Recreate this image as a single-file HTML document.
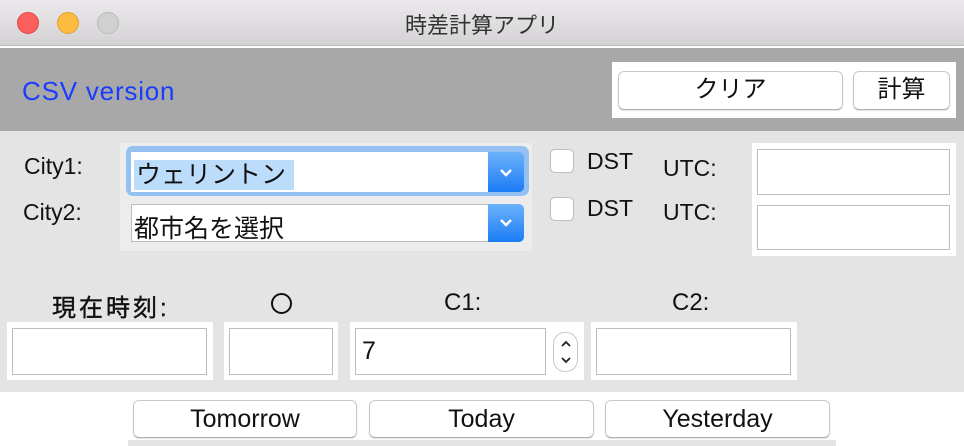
<!DOCTYPE html>
<html><head><meta charset="utf-8"><style>
*{margin:0;padding:0;box-sizing:border-box}
body{width:964px;height:446px;overflow:hidden;background:#e4e4e4;font-family:"Liberation Sans","Noto Sans CJK JP",sans-serif;position:relative;color:#111}
.a{position:absolute}
.title{left:0;top:0;width:964px;height:46px;background:linear-gradient(#ebe9eb,#d4d2d4);border-bottom:1px solid #bbb}
.dot{width:22px;height:22px;border-radius:50%;top:12px}
.band{left:0;top:48px;width:964px;height:83px;background:#a8a8a8}
.btn{background:#fff;border:1px solid #c8c8c8;border-bottom-color:#b0b0b0;border-radius:6px;text-align:center;font-size:24px;box-shadow:0 1px 1px rgba(0,0,0,.12)}
.fld{background:#fff;border:1px solid #bdbdbd}
.wp{background:#fff}
.lbl{font-size:23px}
.arr{background:linear-gradient(#6cb2fb,#1b7cf5);border-radius:0 5px 5px 0}
.cb{width:24px;height:24px;background:#fff;border:1px solid #bdbdbd;border-radius:5px}
</style></head><body>
<div class="a title"></div>
<div class="a dot" style="left:17px;background:#fc605c;border:1px solid #de4a45"></div>
<div class="a dot" style="left:57px;background:#fdbc40;border:1px solid #dea034"></div>
<div class="a dot" style="left:97px;background:#d0d0d0;border:1px solid #b8b8b8"></div>
<div class="a" style="left:0;width:964px;top:8px;text-align:center;font-size:22px;color:#333">時差計算アプリ</div>
<div class="a band"></div>
<div class="a" style="left:0;top:46px;width:964px;height:2px;background:#fff"></div>
<div class="a" style="left:22px;top:76px;font-size:26px;letter-spacing:0.8px;color:#1a3cff">CSV version</div>
<div class="a wp" style="left:612px;top:62px;width:344px;height:56px"></div>
<div class="a btn" style="left:618px;top:71px;width:225px;height:39px;line-height:36px">クリア</div>
<div class="a btn" style="left:853px;top:71px;width:97px;height:39px;line-height:36px">計算</div>

<div class="a lbl" style="left:24px;top:153px">City1:</div>
<div class="a lbl" style="left:23px;top:199px">City2:</div>
<div class="a" style="left:120px;top:143px;width:412px;height:108px;background:#ececec"></div>
<div class="a" style="left:126px;top:146px;width:403px;height:50px;border-radius:7px;background:#94c0f2"></div>
<div class="a fld" style="left:131px;top:152px;width:360px;height:40px;border:none"></div>
<div class="a" style="left:134px;top:160px;width:160px;height:30px;background:#bcdcfb"></div>
<div class="a" style="left:136px;top:155px;font-size:25px">ウェリントン</div>
<div class="a arr" style="left:488px;top:152px;width:36px;height:40px"></div>
<div class="a fld" style="left:131px;top:204px;width:360px;height:38px"></div>
<div class="a" style="left:134px;top:209px;font-size:25px">都市名を選択</div>
<div class="a arr" style="left:488px;top:204px;width:36px;height:38px"></div>
<svg class="a" style="left:496px;top:162px" width="20" height="20"><path d="M5 8l5 5 5-5" stroke="#fff" stroke-width="2.4" fill="none"/></svg>
<svg class="a" style="left:496px;top:212px" width="20" height="20"><path d="M5 8l5 5 5-5" stroke="#fff" stroke-width="2.4" fill="none"/></svg>

<div class="a cb" style="left:550px;top:149px"></div>
<div class="a cb" style="left:550px;top:197px"></div>
<div class="a lbl" style="left:587px;top:148px">DST</div>
<div class="a lbl" style="left:587px;top:195px">DST</div>
<div class="a lbl" style="left:663px;top:155px">UTC:</div>
<div class="a lbl" style="left:663px;top:199px">UTC:</div>
<div class="a wp" style="left:752px;top:143px;width:204px;height:113px"></div>
<div class="a fld" style="left:757px;top:149px;width:193px;height:46px"></div>
<div class="a fld" style="left:757px;top:205px;width:193px;height:45px"></div>

<div class="a lbl" style="left:52px;top:288px;font-size:24px;letter-spacing:3px;-webkit-text-stroke:0.4px #111">現在時刻:</div>
<div class="a" style="left:271px;top:293px;width:21px;height:21px;border:2px solid #111;border-radius:50%"></div>
<div class="a lbl" style="left:444px;top:289px;font-size:24px">C1:</div>
<div class="a lbl" style="left:672px;top:289px;font-size:24px">C2:</div>
<div class="a wp" style="left:7px;top:322px;width:206px;height:58px"></div>
<div class="a fld" style="left:12px;top:328px;width:195px;height:47px"></div>
<div class="a wp" style="left:224px;top:322px;width:114px;height:58px"></div>
<div class="a fld" style="left:229px;top:328px;width:104px;height:47px"></div>
<div class="a wp" style="left:350px;top:322px;width:234px;height:58px"></div>
<div class="a fld" style="left:355px;top:328px;width:191px;height:47px"></div>
<div class="a" style="left:362px;top:337px;font-size:25px">7</div>
<div class="a" style="left:553px;top:332px;width:25px;height:40px;background:#fff;border:1px solid #c8c8c8;border-radius:12px"></div>
<svg class="a" style="left:556px;top:336px" width="20" height="32"><path d="M6 10l4-4 4 4M6 22l4 4 4-4" stroke="#222" stroke-width="1.8" fill="none"/></svg>
<div class="a wp" style="left:591px;top:322px;width:206px;height:58px"></div>
<div class="a fld" style="left:596px;top:328px;width:195px;height:47px"></div>

<div class="a" style="left:0;top:392px;width:964px;height:54px;background:#fff"></div>
<div class="a" style="left:128px;top:440px;width:708px;height:6px;background:#e4e4e4"></div>
<div class="a btn" style="left:133px;top:400px;width:224px;height:38px;line-height:36px;font-size:25px">Tomorrow</div>
<div class="a btn" style="left:369px;top:400px;width:225px;height:38px;line-height:36px;font-size:25px">Today</div>
<div class="a btn" style="left:605px;top:400px;width:225px;height:38px;line-height:36px;font-size:25px">Yesterday</div>
</body></html>
